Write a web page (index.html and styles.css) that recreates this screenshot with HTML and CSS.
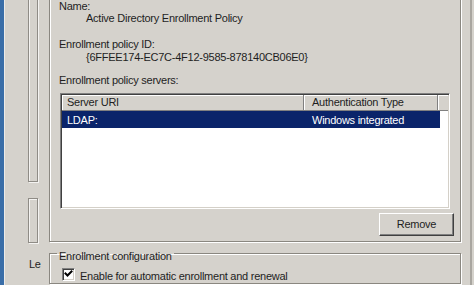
FILE: index.html
```html
<!DOCTYPE html>
<html>
<head>
<meta charset="utf-8">
<link rel="stylesheet" href="styles.css">
</head>
<body>
<div class="left">
  <div class="blue"></div>
  <div class="leftpane">
    <div class="etch box1"></div>
    <div class="etch box2"></div>
    <div class="le">Le</div>
  </div>
</div>
<div class="main">
  <div class="group group1">
    <p class="lbl first">Name:</p>
    <p class="lbl val val1">Active Directory Enrollment Policy</p>
    <p class="lbl gap-id">Enrollment policy ID:</p>
    <p class="lbl val">{6FFEE174-EC7C-4F12-9585-878140CB06E0}</p>
    <p class="lbl gap-srv">Enrollment policy servers:</p>
    <div class="list">
      <div class="hdr">
        <div class="hcell c1">Server URI</div>
        <div class="hcell c2">Authentication Type</div>
        <div class="hfill"></div>
      </div>
      <div class="row sel">
        <div class="cell c1">LDAP:</div>
        <div class="cell c2">Windows integrated</div>
      </div>
    </div>
    <button class="btn">Remove</button>
  </div>
  <fieldset class="group group2">
    <legend class="legend">Enrollment configuration</legend>
    <div class="chkrow">
      <span class="chk"><svg width="9" height="9" viewBox="0 0 9 9"><path d="M1.5 3.5 L3.5 5.5 L7.5 1.5" fill="none" stroke="#000" stroke-width="2" stroke-linecap="square"/></svg></span>
      <span class="chktext">Enable for automatic enrollment and renewal</span>
    </div>
  </fieldset>
</div>
<div class="right"></div>
</body>
</html>
```

FILE: styles.css
```css
html, body {
  margin: 0;
  padding: 0;
}
body {
  width: 474px;
  height: 285px;
  overflow: hidden;
  display: flex;
  background: #d5d2cc;
  font-family: "Liberation Sans", Arial, sans-serif;
  font-size: 11px;
  line-height: 13px;
  letter-spacing: -0.25px;
  color: #1e1e1e;
}
.left {
  width: 49px;
  flex: 0 0 49px;
  display: flex;
}
.blue {
  width: 4px;
  background: #3a6ea8;
}
.leftpane {
  flex: 1;
  border-left: 1px solid #ecebe8;
  padding-left: 23px;
  display: flex;
  flex-direction: column;
  align-items: flex-start;
}
.etch {
  border: 1px solid #8f8c86;
  box-shadow: 1px 1px 0 #f4f3f1, inset 1px 1px 0 #f4f3f1;
  width: 8px;
}
.box1 {
  margin-top: -5px;
  height: 185px;
}
.box2 {
  margin-top: 16px;
  height: 43px;
}
.le {
  margin-top: 15px;
  margin-left: 1px;
}
.main {
  flex: 0 0 413px;
  display: flex;
  flex-direction: column;
}
.group {
  border: 1px solid #8a8780;
  box-shadow: 1px 1px 0 #fff, inset 1px 1px 0 #fff;
  width: 412px;
  box-sizing: border-box;
}
.group1 {
  margin-top: -10px;
  padding: 9px 6px 5px 9px;
  display: flex;
  flex-direction: column;
}
.lbl {
  margin: 0;
  white-space: nowrap;
}
.val {
  padding-left: 27px;
}
.val1 {
  margin-top: -1px;
}
.gap-id {
  margin-top: 13px;
}
.gap-srv {
  margin-top: 10px;
}
.list {
  margin: 6px 4px 0 1px;
  height: 116px;
  box-sizing: border-box;
  background: #fff;
  border-top: 1px solid #808080;
  border-left: 1px solid #808080;
  border-right: 1px solid #fff;
  border-bottom: 1px solid #fff;
  box-shadow: inset 1px 1px 0 #404040, inset -1px -1px 0 #d4d0c8;
  padding: 1px;
}
.hdr {
  display: flex;
  height: 16px;
  background: #d5d2cc;
}
.hcell {
  box-sizing: border-box;
  height: 16px;
  padding-top: 1px;
  border-right: 1px solid #808080;
  border-bottom: 1px solid #808080;
  box-shadow: inset 1px 1px 0 #fff;
  white-space: nowrap;
}
.hfill {
  flex: 1;
  border-bottom: 1px solid #808080;
  box-shadow: inset 1px 1px 0 #fff;
}
.c1 {
  width: 242px;
  padding-left: 5px;
  box-sizing: border-box;
}
.c2 {
  width: 134px;
  padding-left: 8px;
  box-sizing: border-box;
}
.row {
  display: flex;
  height: 17px;
  width: 378px;
}
.cell {
  padding-top: 3px;
  white-space: nowrap;
}
.sel {
  background: #0a246a;
  color: #fff;
}
.btn {
  align-self: flex-end;
  margin-top: 4px;
  width: 75px;
  height: 23px;
  padding: 0;
  font: inherit;
  letter-spacing: inherit;
  color: #1e1e1e;
  background: #d5d2cc;
  border: 1px solid;
  border-color: #fff #404040 #404040 #fff;
  box-shadow: inset -1px -1px 0 #808080;
}
.group2 {
  margin: 1px 0 0 0;
  padding: 0 6px 0 7px;
  min-width: 0;
}
.legend {
  padding: 7px 2px 0 2px;
  line-height: 13px;
}
.chkrow {
  display: flex;
  align-items: flex-start;
  margin-top: 5px;
  margin-left: 5px;
}
.chk {
  width: 13px;
  height: 13px;
  box-sizing: border-box;
  background: #fff;
  border: 1px solid;
  border-color: #808080 #fff #fff #808080;
  box-shadow: inset 1px 1px 0 #404040, inset -1px -1px 0 #d4d0c8;
  display: flex;
  align-items: center;
  justify-content: center;
}
.chk svg {
  display: block;
}
.chktext {
  margin-left: 5px;
  padding-top: 2px;
  white-space: nowrap;
}
.right {
  flex: 1;
  padding-left: 8px;
  display: flex;
}
.right::before {
  content: "";
  width: 2px;
  background: #a9a6a0;
}
```
